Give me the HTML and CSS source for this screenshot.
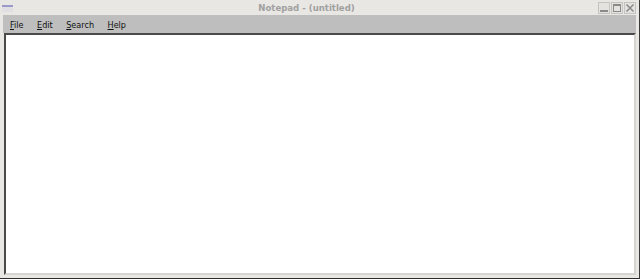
FILE: index.html
```html
<!DOCTYPE html>
<html lang="en">
<head>
    <meta charset="UTF-8">
    <title>Notepad - (untitled)</title>
    <link rel="stylesheet" href="styles.css">
</head>
<body>
    <div class="window">
        <div class="titlebar">
            <span class="app-icon"></span>
            <span class="title">Notepad - (untitled)</span>
            <div class="controls">
                <span class="ctl">
                    <svg width="10" height="10" viewBox="0 0 10 10"><rect x="1" y="7" width="8" height="2" fill="#8a8a8a"/></svg>
                </span>
                <span class="ctl">
                    <svg width="10" height="10" viewBox="0 0 10 10"><rect x="1.5" y="1.5" width="7" height="7" fill="none" stroke="#8a8a8a"/><rect x="1" y="1" width="8" height="2" fill="#8a8a8a"/></svg>
                </span>
                <span class="ctl">
                    <svg width="10" height="10" viewBox="0 0 10 10"><path d="M1.5 1.5 L8.5 8.5 M8.5 1.5 L1.5 8.5" stroke="#8a8a8a" stroke-width="1.5"/></svg>
                </span>
            </div>
        </div>
        <div class="menubar">
            <span class="menu"><u>F</u>ile</span>
            <span class="menu"><u>E</u>dit</span>
            <span class="menu"><u>S</u>earch</span>
            <span class="menu"><u>H</u>elp</span>
        </div>
        <textarea class="editor" spellcheck="false"></textarea>
    </div>
</body>
</html>
```

FILE: styles.css
```css
body {
    margin: 0;
    font-family: "DejaVu Sans Condensed", "DejaVu Sans", sans-serif;
}

.window {
    width: 640px;
    height: 279px;
    box-sizing: border-box;
    background: #e8e7e3;
    border-right: 1px solid #3c3c3c;
    border-bottom: 1px solid #2e2e2e;
    display: flex;
    flex-direction: column;
}

.titlebar {
    height: 15px;
    display: flex;
    align-items: center;
    padding: 0 3px 0 2px;
}

.app-icon {
    width: 11px;
    height: 5px;
    margin-top: 1px;
    background: #e0e0e4;
    border-top: 2px solid #9c9ac8;
}

.title {
    flex: 1;
    text-align: center;
    font-size: 9.5px;
    font-weight: bold;
    color: #a0a0a0;
    padding-left: 2px;
}

.controls {
    display: flex;
    gap: 1px;
}

.ctl {
    width: 12px;
    height: 12px;
    display: flex;
    align-items: center;
    justify-content: center;
    background: #e3e2de;
    border: 1px solid #c4c4c0;
    box-sizing: border-box;
}

.menubar {
    height: 18px;
    margin: 0 3px;
    background: #bebebe;
    display: flex;
    align-items: center;
    padding: 1px 0 0 7px;
    box-sizing: border-box;
}

.menu {
    font-size: 9px;
    color: #111;
    margin-right: 13.5px;
}

.editor {
    flex: 1;
    margin: 0 3px 3px 4px;
    border: none;
    border-top: 2px solid #4a4a4a;
    border-left: 2px solid #4a4a4a;
    border-right: 2px solid #d4d4d0;
    border-bottom: 2px solid #d4d4d0;
    background: #fff;
    resize: none;
    outline: none;
    padding: 0;
}
```
